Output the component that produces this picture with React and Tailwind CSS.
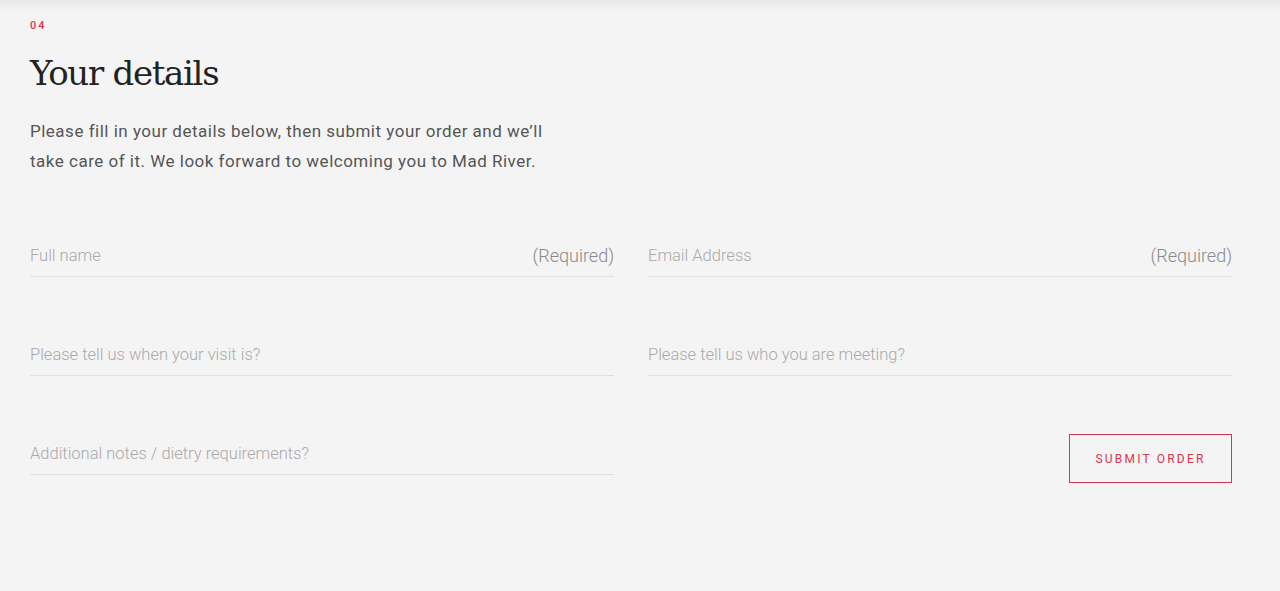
import React, { useState } from "react";

function Field({ placeholder, required, value, onChange }) {
  return (
    <div className="relative flex items-end border-b border-[#e0e0e0] h-[43px]">
      <input
        type="text"
        placeholder={placeholder}
        value={value}
        onChange={onChange}
        className="w-full bg-transparent pb-[7px] text-[16.5px] font-light text-[#333] placeholder:text-[#a9a9a9] outline-none"
        style={{ fontFamily: "Roboto, sans-serif" }}
      />
      {required && (
        <span className="absolute right-0 bottom-[7px] text-[18px] text-[#8a8a8a] font-light pointer-events-none">
          (Required)
        </span>
      )}
    </div>
  );
}

export default function App() {
  const [form, setForm] = useState({ name: "", email: "", visit: "", meeting: "", notes: "" });
  const set = (key) => (ev) => setForm({ ...form, [key]: ev.target.value });

  return (
    <div
      className="relative min-h-[591px] bg-[#f4f4f4] pl-[30px] pt-[19px]"
      style={{ fontFamily: "Roboto, sans-serif" }}
    >
      <div className="absolute inset-x-0 top-0 h-[12px] bg-gradient-to-b from-[#e8e8e8] to-[#f4f4f4]" />
      <div className="relative w-[1202px]">
        <div className="text-[11px] font-medium tracking-[2px] text-[#e0334a] leading-[14px]">04</div>
        <h1
          className="mt-[18px] text-[34px] leading-[44px] text-[#222]"
          style={{ fontFamily: '"DejaVu Serif", serif', letterSpacing: "-1.3px" }}
        >
          Your details
        </h1>
        <p className="mt-[21px] w-[540px] text-[17px] leading-[30px] text-[#555] tracking-[0.5px]">
          Please fill in your details below, then submit your order and we’ll take care of it. We look forward to
          welcoming you to Mad River.
        </p>

        <form className="mt-[58px]" onSubmit={(ev) => ev.preventDefault()}>
          <div className="grid grid-cols-2 gap-x-[34px] gap-y-[56px]">
            <Field placeholder="Full name" required value={form.name} onChange={set("name")} />
            <Field placeholder="Email Address" required value={form.email} onChange={set("email")} />
            <Field placeholder="Please tell us when your visit is?" value={form.visit} onChange={set("visit")} />
            <Field placeholder="Please tell us who you are meeting?" value={form.meeting} onChange={set("meeting")} />
            <Field placeholder="Additional notes / dietry requirements?" value={form.notes} onChange={set("notes")} />
            <div className="flex justify-end items-start pt-[2px]">
              <button
                type="submit"
                className="w-[163px] h-[49px] border border-solid border-[#d8364a] text-[#d8364a] text-[12px] tracking-[2.2px] uppercase"
              >
                Submit order
              </button>
            </div>
          </div>
        </form>
      </div>
    </div>
  );
}
